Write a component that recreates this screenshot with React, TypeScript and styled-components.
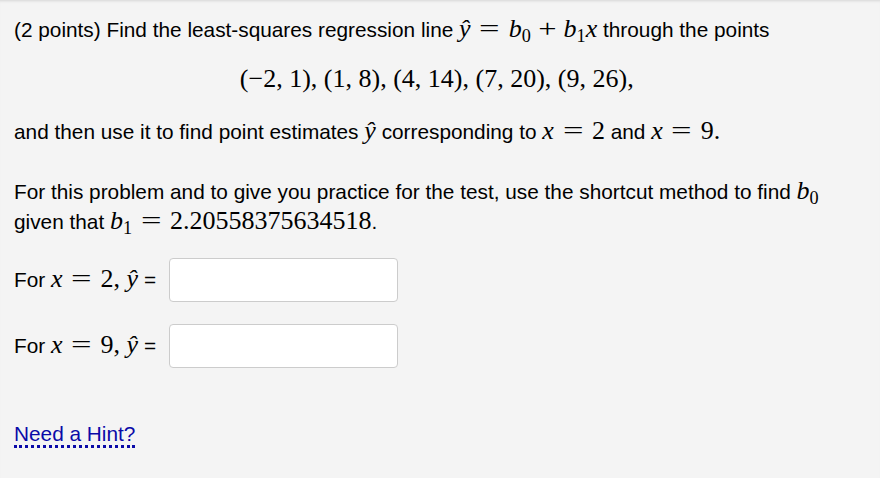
import React from 'react';
import styled, { createGlobalStyle } from 'styled-components';

const GlobalStyle = createGlobalStyle`
  html, body {
    margin: 0;
    padding: 0;
    background: #f4f4f4;
  }
`;

const Page = styled.div`
  box-sizing: border-box;
  min-height: 478px;
  padding: 15px 14px 0 14px;
  background: #f4f4f4;
  box-shadow: inset 0 3px 3px -2px rgba(0, 0, 0, 0.12);
  font-family: 'Liberation Sans', Arial, sans-serif;
  font-size: 20.8px;
  color: #000;
`;

const Para = styled.div<{ $gap?: number }>`
  margin-top: ${p => p.$gap ?? 0}px;
  line-height: 30px;
`;

const Display = styled.div<{ $gap?: number }>`
  margin-top: ${p => p.$gap ?? 0}px;
  height: 40px;
  line-height: 40px;
  text-align: center;
`;

const MathSpan = styled.span`
  font-family: 'Liberation Serif', 'DejaVu Serif', serif;
  font-size: 26px;
  line-height: 0;
  white-space: nowrap;
`;

const Var = styled.i`
  font-style: italic;
`;

const Sub = styled.sub`
  font-size: 70%;
  font-style: normal;
  vertical-align: -0.25em;
  line-height: 0;
`;

const Op = styled.span<{ $space?: number; $scale?: number }>`
  display: inline-block;
  margin: 0 ${p => p.$space ?? 0.45}em;
  transform: scaleX(${p => p.$scale ?? 1.4});
`;

const Punct = styled.span`
  margin-right: 0.25em;
`;

const Row = styled.div<{ $gap: number }>`
  margin-top: ${p => p.$gap}px;
  display: flex;
  align-items: center;
  gap: 13px;
  height: 44px;
  line-height: 30px;
`;

const AnswerInput = styled.input`
  box-sizing: border-box;
  width: 229px;
  height: 44px;
  border: 1px solid #cccccc;
  border-radius: 4px;
  background: #ffffff;
  font-size: 16px;
  padding: 4px 8px;
  outline: none;
`;

const HintLink = styled.a`
  display: inline-block;
  margin-top: 55px;
  line-height: 22px;
  color: #0a0aa8;
  text-decoration: none;
  border-bottom: 3px dotted #0a0aa8;
`;

const YHat = () => <Var>ŷ</Var>;

const points: Array<[string, string]> = [
  ['−2', '1'],
  ['1', '8'],
  ['4', '14'],
  ['7', '20'],
  ['9', '26'],
];

const estimates = ['2', '9'];

export default function App() {
  return (
    <>
      <GlobalStyle />
      <Page>
        <Para>
          (2 points) Find the least-squares regression line{' '}
          <MathSpan>
            <YHat />
            <Op>=</Op>
            <Var>b</Var>
            <Sub>0</Sub>
            <Op $space={0.35} $scale={1.25}>+</Op>
            <Var>b</Var>
            <Sub>1</Sub>
            <Var>x</Var>
          </MathSpan>{' '}
          through the points
        </Para>
        <Display $gap={15}>
          <MathSpan>
            {points.map(([a, b], i) => (
              <React.Fragment key={i}>
                ({a}
                <Punct>,</Punct>
                {b})<Punct>,</Punct>
              </React.Fragment>
            ))}
          </MathSpan>
        </Display>
        <Para $gap={17}>
          and then use it to find point estimates{' '}
          <MathSpan>
            <YHat />
          </MathSpan>{' '}
          corresponding to{' '}
          <MathSpan>
            <Var>x</Var>
            <Op>=</Op>2
          </MathSpan>{' '}
          and{' '}
          <MathSpan>
            <Var>x</Var>
            <Op>=</Op>9.
          </MathSpan>
        </Para>
        <Para $gap={30}>
          For this problem and to give you practice for the test, use the shortcut method to find{' '}
          <MathSpan>
            <Var>b</Var>
            <Sub>0</Sub>
          </MathSpan>
          <br />
          given that{' '}
          <MathSpan>
            <Var>b</Var>
            <Sub>1</Sub>
            <Op>=</Op>2.20558375634518
          </MathSpan>
          .
        </Para>
        {estimates.map((x, i) => (
          <Row key={x} $gap={i === 0 ? 21 : 22}>
            <span>
              For{' '}
              <MathSpan>
                <Var>x</Var>
                <Op>=</Op>
                {x}
                <Punct>,</Punct>
                <YHat />
              </MathSpan>{' '}
              =
            </span>
            <AnswerInput type="text" />
          </Row>
        ))}
        <HintLink href="#">Need a Hint?</HintLink>
      </Page>
    </>
  );
}
